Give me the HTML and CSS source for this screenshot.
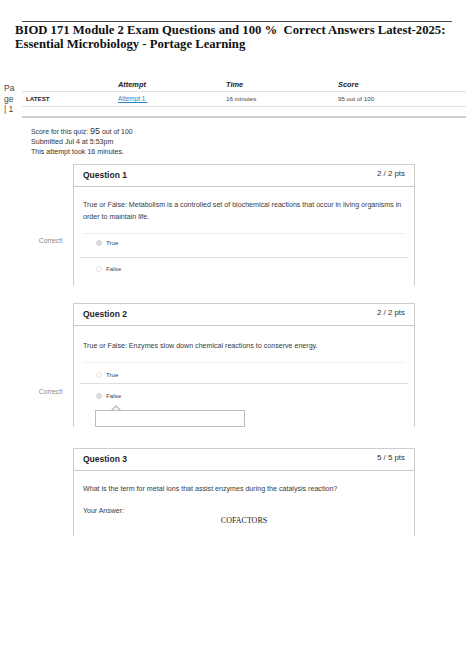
FILE: index.html
```html
<!DOCTYPE html>
<html lang="en">
<head>
<meta charset="utf-8">
<title>BIOD 171 Module 2 Exam</title>
<link rel="stylesheet" href="styles.css">
</head>
<body>
<div class="page">
  <header class="doc-head">
    <div class="doc-rule"></div>
    <h1 class="doc-title">BIOD 171 Module 2 Exam Questions and 100 %&nbsp; Correct Answers Latest-2025: Essential Microbiology - Portage Learning</h1>
  </header>

  <div class="sheet">
    <div class="page-num"><span>Pa</span><span>ge</span><span>| 1</span></div>

    <main class="content">
      <div class="attempts">
        <div class="att-row att-head">
          <span></span><span>Attempt</span><span>Time</span><span>Score</span>
        </div>
        <div class="att-row att-body">
          <span class="latest">LATEST</span>
          <span><a class="att-link">Attempt 1&nbsp;</a></span>
          <span>16 minutes</span>
          <span>95 out of 100</span>
        </div>
        <div class="att-row att-empty"></div>
      </div>

      <div class="summary">
        <div class="sum-score">Score for this quiz: <span class="sum-big">95</span> out of 100</div>
        <div class="sum-line">Submitted Jul 4 at 5:53pm</div>
        <div class="sum-line">This attempt took 16 minutes.</div>
      </div>

      <section class="card card-q1">
        <div class="card-head">
          <span class="q-name">Question 1</span>
          <span class="q-pts">2 / 2 pts</span>
        </div>
        <div class="card-body">
          <p class="q-text q-text-first">True or False: Metabolism is a controlled set of biochemical reactions that occur in living organisms in order to maintain life.</p>
          <div class="options">
            <div class="opt opt-a opt-line">
              <span class="correct">Correct!</span>
              <span class="radio radio-on"></span><span class="opt-label">True</span>
            </div>
            <div class="opt opt-b">
              <span class="radio"></span><span class="opt-label">False</span>
            </div>
          </div>
        </div>
      </section>

      <section class="card card-q2">
        <div class="card-head">
          <span class="q-name">Question 2</span>
          <span class="q-pts">2 / 2 pts</span>
        </div>
        <div class="card-body">
          <p class="q-text q-text-single">True or False: Enzymes slow down chemical reactions to conserve energy.</p>
          <div class="options">
            <div class="opt opt-c opt-line">
              <span class="radio"></span><span class="opt-label">True</span>
            </div>
            <div class="opt opt-d">
              <span class="correct correct-high">Correct!</span>
              <span class="radio radio-on"></span><span class="opt-label">False</span>
            </div>
          </div>
          <div class="comment-box"></div>
        </div>
      </section>

      <section class="card card-q3">
        <div class="card-head">
          <span class="q-name">Question 3</span>
          <span class="q-pts">5 / 5 pts</span>
        </div>
        <div class="card-body">
          <p class="q-text q-text-plain">What is the term for metal ions that assist enzymes during the catalysis reaction?</p>
          <p class="your-answer">Your Answer:</p>
          <p class="answer-text">COFACTORS</p>
        </div>
      </section>
    </main>
  </div>
</div>
</body>
</html>
```

FILE: styles.css
```css
* { box-sizing: border-box; }

html, body {
  margin: 0;
  padding: 0;
  background: #ffffff;
}

body {
  font-family: "Liberation Sans", Arial, Helvetica, sans-serif;
  color: #333333;
}

.page {
  width: 474px;
  min-height: 671px;
}

/* ---------- document heading ---------- */
.doc-head {
  padding-top: 21px;
}

.doc-rule {
  margin-left: 22px;
  width: 430px;
  border-top: 1.5px solid #4a4a4a;
}

.doc-title {
  margin: 1px 0 0 0;
  padding-left: 15px;
  width: 462px;
  font-family: "Liberation Serif", "Times New Roman", serif;
  font-weight: bold;
  font-size: 12.7px;
  line-height: 14px;
  color: #111111;
}

/* ---------- sheet ---------- */
.sheet {
  display: flex;
  margin-top: 26.5px;
}

.page-num {
  width: 22px;
  padding-left: 4px;
  padding-top: 5.75px;
  display: flex;
  flex-direction: column;
  font-size: 8.5px;
  line-height: 10.5px;
  color: #444444;
}

.content {
  width: 444px;
}

/* ---------- attempts table ---------- */
.att-row {
  display: grid;
  grid-template-columns: 92px 108px 112px 1fr;
  padding-left: 4px;
  align-items: center;
}

.att-head {
  height: 14px;
  border-bottom: 1px solid #e2e2e2;
  font-size: 7.4px;
  font-weight: bold;
  font-style: italic;
  color: #222222;
}

.att-body {
  height: 15px;
  border-bottom: 1px solid #e2e2e2;
  font-size: 6.2px;
  color: #444444;
}

.latest {
  font-weight: bold;
  color: #222222;
}

.att-link {
  color: #2f86c8;
  text-decoration: underline;
  font-size: 6.4px;
}

.att-empty {
  height: 11px;
  border-bottom: 2px solid #d2d2d2;
}

/* ---------- summary ---------- */
.summary {
  margin-top: 8px;
  padding-left: 9px;
  font-size: 7.1px;
  color: #333333;
}

.sum-score {
  line-height: 11px;
  font-size: 6.9px;
}

.sum-big {
  font-size: 9px;
}

.sum-line {
  line-height: 10px;
}

/* ---------- question cards ---------- */
.card {
  margin-left: 51px;
  width: 342px;
  border: 1px solid #cdcdcd;
  border-bottom: none;
}

.card-q1 { margin-top: 7px; }
.card-q2 { margin-top: 17px; }
.card-q3 { margin-top: 21px; }

.card-head {
  height: 22px;
  padding: 0 9px;
  display: flex;
  justify-content: space-between;
  align-items: center;
  border-bottom: 1px solid #c9c9c9;
}

.q-name {
  font-size: 8.5px;
  font-weight: bold;
  color: #1e1e1e;
}

.q-pts {
  font-size: 7.9px;
  color: #333333;
  margin-bottom: 3px;
}

.card-body {
  padding: 0 9px;
}

.q-text {
  margin: 0;
  font-size: 7.1px;
  line-height: 12px;
  color: #3a3a3a;
}

.q-text-first {
  padding-top: 12px;
  padding-bottom: 10px;
  border-bottom: 1px solid #ececec;
}

.q-text-single {
  padding-top: 14px;
  padding-bottom: 10px;
  border-bottom: 1px solid #f0f0f0;
}

.q-text-plain {
  padding-top: 12px;
}

.options {
  margin: 0 -3px;
}

.opt {
  position: relative;
  display: flex;
  align-items: center;
  padding-left: 16px;
  font-size: 6.2px;
  line-height: 10px;
  color: #444444;
}

.opt-line {
  border-bottom: 1px solid #dedede;
}

.opt-a { padding-top: 4px; padding-bottom: 9px; }
.opt-b { padding-top: 6px; padding-bottom: 12px; }
.opt-c { padding-top: 7px; padding-bottom: 3px; }
.opt-d { padding-top: 7px; padding-bottom: 0; }

.radio {
  width: 6px;
  height: 6px;
  border-radius: 50%;
  border: 1px solid #e2e2e2;
  background: #ffffff;
  margin-right: 4px;
  flex: none;
}

.radio-on {
  background: #dcdcdc;
  border-color: #d6d6d6;
}

.correct {
  position: absolute;
  right: calc(100% + 17px);
  top: 2px;
  font-size: 6.8px;
  line-height: 10px;
  color: #8a8a8a;
  white-space: nowrap;
}

.correct-high {
  top: 3px;
}

.comment-box {
  position: relative;
  margin: 9px 0 13px 12px;
  width: 150px;
  height: 17px;
  border: 1.5px solid #bcbcbc;
}

.comment-box::before {
  content: "";
  position: absolute;
  left: 15px;
  top: -5.5px;
  border-left: 5px solid transparent;
  border-right: 5px solid transparent;
  border-bottom: 5px solid #bcbcbc;
}

.comment-box::after {
  content: "";
  position: absolute;
  left: 16.5px;
  top: -3.5px;
  border-left: 3.5px solid transparent;
  border-right: 3.5px solid transparent;
  border-bottom: 3.5px solid #ffffff;
}

.your-answer {
  margin: 10px 0 0 0;
  font-size: 7px;
  line-height: 12px;
  color: #3a3a3a;
}

.answer-text {
  margin: 0;
  padding-bottom: 11px;
  text-align: center;
  font-family: "Liberation Serif", "Times New Roman", serif;
  font-size: 8px;
  line-height: 8px;
  color: #222222;
}
```
